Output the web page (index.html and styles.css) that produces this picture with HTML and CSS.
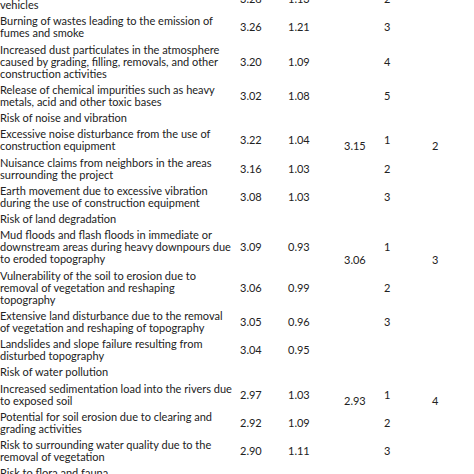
FILE: index.html
```html
<!DOCTYPE html>
<html>
<head>
<meta charset="utf-8">
<link rel="stylesheet" href="styles.css">
</head>
<body>
<table class="risk">
<colgroup>
<col class="c-item"><col class="c-mean"><col class="c-sd"><col class="c-gmean"><col class="c-rank"><col class="c-grank">
</colgroup>
<tbody>
<tr><td>Air pollution due to exhaust from construction vehicles</td><td>3.28</td><td>1.13</td><td></td><td>2</td><td></td></tr>
<tr><td>Burning of wastes leading to the emission of fumes and smoke</td><td>3.26</td><td>1.21</td><td></td><td>3</td><td></td></tr>
<tr><td>Increased dust particulates in the atmosphere caused by grading, filling, removals, and other construction activities</td><td>3.20</td><td>1.09</td><td></td><td>4</td><td></td></tr>
<tr><td>Release of chemical impurities such as heavy metals, acid and other toxic bases</td><td>3.02</td><td>1.08</td><td></td><td>5</td><td></td></tr>
<tr><td>Risk of noise and vibration</td><td></td><td></td><td></td><td></td><td></td></tr>
<tr><td>Excessive noise disturbance from the use of construction equipment</td><td>3.22</td><td>1.04</td><td class="grp grp-noise">3.15</td><td>1</td><td class="grp grp-noise">2</td></tr>
<tr><td>Nuisance claims from neighbors in the areas surrounding the project</td><td>3.16</td><td>1.03</td><td></td><td>2</td><td></td></tr>
<tr><td>Earth movement due to excessive vibration during the use of construction equipment</td><td>3.08</td><td>1.03</td><td></td><td>3</td><td></td></tr>
<tr><td>Risk of land degradation</td><td></td><td></td><td></td><td></td><td></td></tr>
<tr><td>Mud floods and flash floods in immediate or downstream areas during heavy downpours due to eroded topography</td><td>3.09</td><td>0.93</td><td class="grp grp-land">3.06</td><td>1</td><td class="grp grp-land">3</td></tr>
<tr><td>Vulnerability of the soil to erosion due to removal of vegetation and reshaping topography</td><td>3.06</td><td>0.99</td><td></td><td>2</td><td></td></tr>
<tr><td>Extensive land disturbance due to the removal of vegetation and reshaping of topography</td><td>3.05</td><td>0.96</td><td></td><td>3</td><td></td></tr>
<tr><td>Landslides and slope failure resulting from disturbed topography</td><td>3.04</td><td>0.95</td><td></td><td></td><td></td></tr>
<tr><td>Risk of water pollution</td><td></td><td></td><td></td><td></td><td></td></tr>
<tr><td>Increased sedimentation load into the rivers due to exposed soil</td><td>2.97</td><td>1.03</td><td class="grp grp-water">2.93</td><td>1</td><td class="grp grp-water">4</td></tr>
<tr><td>Potential for soil erosion due to clearing and grading activities</td><td>2.92</td><td>1.09</td><td></td><td>2</td><td></td></tr>
<tr><td>Risk to surrounding water quality due to the removal of vegetation</td><td>2.90</td><td>1.11</td><td></td><td>3</td><td></td></tr>
<tr><td>Risk to flora and fauna</td><td></td><td></td><td></td><td></td><td></td></tr>
</tbody>
</table>
</body>
</html>
```
FILE: styles.css
```css
html, body {
  margin: 0;
  padding: 0;
  background: #ffffff;
}
body {
  overflow: hidden;
  height: 474px;
  font-family: Lato, "Open Sans", sans-serif;
  font-size: 11px;
  line-height: 12px;
  color: #222222;
}
.risk {
  border-collapse: collapse;
  table-layout: fixed;
  width: 480px;
  margin-top: -15px;
}
.c-item { width: 240px; }
.c-mean { width: 48px; }
.c-sd { width: 56px; }
.c-gmean { width: 40px; }
.c-rank { width: 48px; }
.c-grank { width: 48px; }
.risk td {
  padding: 2.125px 8px 2.125px 0;
  vertical-align: middle;
  text-align: left;
}
.risk td.grp-noise { padding-top: 14px; padding-bottom: 2px; }
.risk td.grp-land { padding-top: 24.6px; padding-bottom: 0; }
.risk td.grp-water { padding-top: 14px; padding-bottom: 2px; }
```
